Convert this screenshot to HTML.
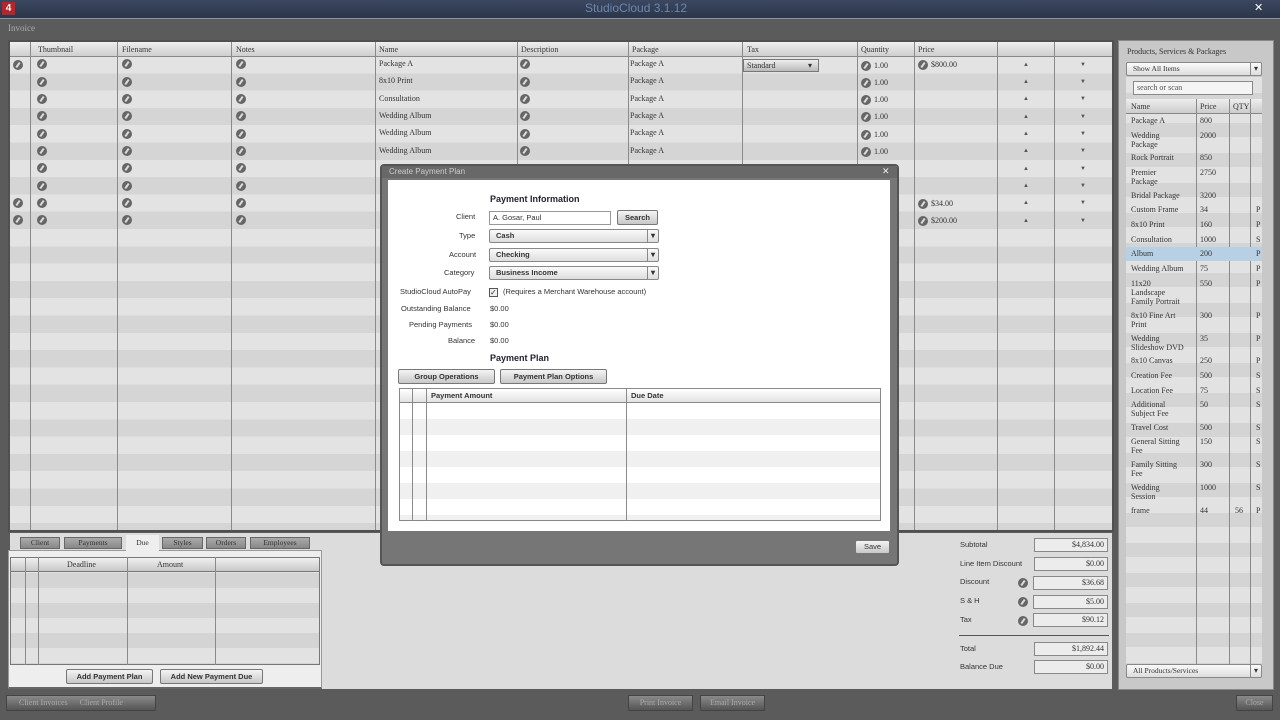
<!DOCTYPE html>
<html><head><meta charset="utf-8"><style>
*{margin:0;padding:0;box-sizing:border-box}
body{width:1280px;height:720px;overflow:hidden;background:#5b5b5b;font-family:"Liberation Serif",serif;font-size:8px;color:#333;position:relative}
.a{position:absolute}
.t{position:absolute;white-space:nowrap;line-height:10px}
.ic{position:absolute;width:10px;height:10px;border-radius:50%;background:#666}
.ic::after{content:"";position:absolute;left:4px;top:2px;width:2px;height:6px;background:#ddd;transform:rotate(35deg)}
.vl{position:absolute;width:1px;background:#8a8a8a}
.btn{position:absolute;border:1px solid #777;border-radius:2px;background:linear-gradient(#f4f4f4,#c8c8c8);text-align:center;font-weight:bold;font-family:"Liberation Sans",sans-serif;font-size:7.5px;color:#333}
.tab{position:absolute;border:1px solid #666;background:linear-gradient(#aaa,#888);text-align:center;font-size:7.5px;color:#333;line-height:10px}
.sans{font-family:"Liberation Sans",sans-serif}
.dd{position:absolute;border:1px solid #888;border-radius:2px;background:linear-gradient(#fafafa,#ddd);font-family:"Liberation Sans",sans-serif;font-weight:bold;font-size:7.5px;padding-left:6px}
.dd::after{content:"▾";position:absolute;right:0;top:0;width:10px;border-left:1px solid #888;text-align:center;font-size:8px}
.box{position:absolute;border:1px solid #888;background:#ececec;text-align:right;padding-right:3px;font-size:8px;line-height:12px}
.ar{position:absolute;font-size:6px;color:#555}
</style></head><body>
<!-- title bar -->
<div class="a" style="left:0;top:0;width:1280px;height:18px;background:linear-gradient(#3b4860,#2b364a)"></div>
<div class="a" style="left:2px;top:2px;width:13px;height:13px;background:#b3262b;color:#fff;font:bold 10px 'Liberation Sans';text-align:center;line-height:13px">4</div>
<div class="t sans" style="left:585px;top:3px;font-size:12px;color:#6f86ad">StudioCloud 3.1.12</div>
<div class="t sans" style="left:1254px;top:3px;font-size:11px;color:#fff">✕</div>
<div class="a" style="left:0;top:18px;width:1280px;height:1px;background:#8a94a4"></div>
<div class="t" style="left:8px;top:23px;font-size:9px;color:#aaa">Invoice</div>

<!-- main grid -->
<div class="a" style="left:8px;top:40px;width:1106px;height:492px;background:#505050"></div>
<div class="a" style="left:10px;top:42px;width:1102px;height:488px;background:repeating-linear-gradient(#e3e3e3 0 17.3px,#d5d5d5 17.3px 34.6px);background-position:0 14px"></div>
<div class="a" style="left:10px;top:42px;width:1102px;height:15px;background:linear-gradient(#eee,#cfcfcf);border-bottom:1px solid #888"></div>
<div class="vl" style="left:30px;top:42px;height:488px"></div>
<div class="vl" style="left:117px;top:42px;height:488px"></div>
<div class="vl" style="left:231px;top:42px;height:488px"></div>
<div class="vl" style="left:375px;top:42px;height:488px"></div>
<div class="vl" style="left:517px;top:42px;height:488px"></div>
<div class="vl" style="left:628px;top:42px;height:488px"></div>
<div class="vl" style="left:742px;top:42px;height:488px"></div>
<div class="vl" style="left:857px;top:42px;height:488px"></div>
<div class="vl" style="left:914px;top:42px;height:488px"></div>
<div class="vl" style="left:997px;top:42px;height:488px"></div>
<div class="vl" style="left:1054px;top:42px;height:488px"></div>
<div class="t" style="left:38px;top:45px">Thumbnail</div>
<div class="t" style="left:122px;top:45px">Filename</div>
<div class="t" style="left:236px;top:45px">Notes</div>
<div class="t" style="left:379px;top:45px">Name</div>
<div class="t" style="left:521px;top:45px">Description</div>
<div class="t" style="left:632px;top:45px">Package</div>
<div class="t" style="left:747px;top:45px">Tax</div>
<div class="t" style="left:861px;top:45px">Quantity</div>
<div class="t" style="left:918px;top:45px">Price</div>

<!-- row content -->
<div class="ic" style="left:13px;top:60px"></div><div class="ic" style="left:13px;top:198px"></div><div class="ic" style="left:13px;top:215px"></div>
<div class="ic" style="left:37px;top:59px"></div><div class="ic" style="left:37px;top:77px"></div><div class="ic" style="left:37px;top:94px"></div><div class="ic" style="left:37px;top:111px"></div><div class="ic" style="left:37px;top:129px"></div><div class="ic" style="left:37px;top:146px"></div><div class="ic" style="left:37px;top:163px"></div><div class="ic" style="left:37px;top:181px"></div><div class="ic" style="left:37px;top:198px"></div><div class="ic" style="left:37px;top:215px"></div>
<div class="ic" style="left:122px;top:59px"></div><div class="ic" style="left:122px;top:77px"></div><div class="ic" style="left:122px;top:94px"></div><div class="ic" style="left:122px;top:111px"></div><div class="ic" style="left:122px;top:129px"></div><div class="ic" style="left:122px;top:146px"></div><div class="ic" style="left:122px;top:163px"></div><div class="ic" style="left:122px;top:181px"></div><div class="ic" style="left:122px;top:198px"></div><div class="ic" style="left:122px;top:215px"></div>
<div class="ic" style="left:236px;top:59px"></div><div class="ic" style="left:236px;top:77px"></div><div class="ic" style="left:236px;top:94px"></div><div class="ic" style="left:236px;top:111px"></div><div class="ic" style="left:236px;top:129px"></div><div class="ic" style="left:236px;top:146px"></div><div class="ic" style="left:236px;top:163px"></div><div class="ic" style="left:236px;top:181px"></div><div class="ic" style="left:236px;top:198px"></div><div class="ic" style="left:236px;top:215px"></div>
<div class="ic" style="left:520px;top:59px"></div><div class="ic" style="left:520px;top:77px"></div><div class="ic" style="left:520px;top:94px"></div><div class="ic" style="left:520px;top:111px"></div><div class="ic" style="left:520px;top:129px"></div><div class="ic" style="left:520px;top:146px"></div>
<div class="t" style="left:379px;top:59px">Package A</div>
<div class="t" style="left:379px;top:76px">8x10 Print</div>
<div class="t" style="left:379px;top:94px">Consultation</div>
<div class="t" style="left:379px;top:111px">Wedding Album</div>
<div class="t" style="left:379px;top:128px">Wedding Album</div>
<div class="t" style="left:379px;top:146px">Wedding Album</div>
<div class="t" style="left:630px;top:59px">Package A</div><div class="t" style="left:630px;top:76px">Package A</div><div class="t" style="left:630px;top:94px">Package A</div><div class="t" style="left:630px;top:111px">Package A</div><div class="t" style="left:630px;top:128px">Package A</div><div class="t" style="left:630px;top:146px">Package A</div>
<div class="a" style="left:743px;top:59px;width:76px;height:13px;border:1px solid #777;background:linear-gradient(#eee,#bbb)"><span class="t" style="left:3px;top:1px">Standard</span><span class="t" style="left:64px;top:1px">▾</span></div>
<div class="ic" style="left:861px;top:61px"></div><div class="ic" style="left:861px;top:78px"></div><div class="ic" style="left:861px;top:95px"></div><div class="ic" style="left:861px;top:112px"></div><div class="ic" style="left:861px;top:130px"></div><div class="ic" style="left:861px;top:147px"></div>
<div class="t" style="left:874px;top:61px">1.00</div><div class="t" style="left:874px;top:78px">1.00</div><div class="t" style="left:874px;top:95px">1.00</div><div class="t" style="left:874px;top:112px">1.00</div><div class="t" style="left:874px;top:130px">1.00</div><div class="t" style="left:874px;top:147px">1.00</div>
<div class="ic" style="left:918px;top:60px"></div><div class="t" style="left:931px;top:60px">$800.00</div>
<div class="ic" style="left:918px;top:199px"></div><div class="t" style="left:931px;top:199px">$34.00</div>
<div class="ic" style="left:918px;top:216px"></div><div class="t" style="left:931px;top:216px">$200.00</div>
<div class="ar" style="left:1023px;top:62px">▲</div><div class="ar" style="left:1080px;top:62px">▼</div>
<div class="ar" style="left:1023px;top:79px">▲</div><div class="ar" style="left:1080px;top:79px">▼</div>
<div class="ar" style="left:1023px;top:96px">▲</div><div class="ar" style="left:1080px;top:96px">▼</div>
<div class="ar" style="left:1023px;top:114px">▲</div><div class="ar" style="left:1080px;top:114px">▼</div>
<div class="ar" style="left:1023px;top:131px">▲</div><div class="ar" style="left:1080px;top:131px">▼</div>
<div class="ar" style="left:1023px;top:148px">▲</div><div class="ar" style="left:1080px;top:148px">▼</div>
<div class="ar" style="left:1023px;top:166px">▲</div><div class="ar" style="left:1080px;top:166px">▼</div>
<div class="ar" style="left:1023px;top:183px">▲</div><div class="ar" style="left:1080px;top:183px">▼</div>
<div class="ar" style="left:1023px;top:200px">▲</div><div class="ar" style="left:1080px;top:200px">▼</div>
<div class="ar" style="left:1023px;top:218px">▲</div><div class="ar" style="left:1080px;top:218px">▼</div>

<!-- bottom light area -->
<div class="a" style="left:10px;top:533px;width:1102px;height:156px;background:#dcdcdc"></div>
<div class="a" style="left:8px;top:550px;width:314px;height:139px;background:#eee;border:1px solid #999;border-bottom:2px solid #666"></div>
<!-- tabs -->
<div class="tab" style="left:20px;top:537px;width:40px;height:12px">Client</div>
<div class="tab" style="left:64px;top:537px;width:58px;height:12px">Payments</div>
<div class="a" style="left:126px;top:535px;width:33px;height:16px;background:#eee;text-align:center;line-height:16px;font-size:7.5px">Due</div>
<div class="tab" style="left:162px;top:537px;width:41px;height:12px">Styles</div>
<div class="tab" style="left:206px;top:537px;width:40px;height:12px">Orders</div>
<div class="tab" style="left:250px;top:537px;width:60px;height:12px">Employees</div>
<div class="a" style="left:10px;top:557px;width:310px;height:108px;border:1px solid #777;background:repeating-linear-gradient(#e2e2e2 0 15px,#d4d4d4 15px 30px)"></div>
<div class="a" style="left:10px;top:557px;width:310px;height:15px;background:linear-gradient(#f0f0f0,#c8c8c8);border:1px solid #777"></div>
<div class="vl" style="left:25px;top:557px;height:108px"></div><div class="vl" style="left:38px;top:557px;height:108px"></div><div class="vl" style="left:127px;top:557px;height:108px"></div><div class="vl" style="left:215px;top:557px;height:108px"></div>
<div class="t" style="left:67px;top:560px">Deadline</div><div class="t" style="left:157px;top:560px">Amount</div>
<div class="btn" style="left:66px;top:669px;width:87px;height:15px;line-height:13px">Add Payment Plan</div>
<div class="btn" style="left:160px;top:669px;width:103px;height:15px;line-height:13px">Add New Payment Due</div>

<!-- totals -->
<div class="t sans" style="left:960px;top:540px;font-size:7.5px">Subtotal</div><div class="box" style="left:1034px;top:538px;width:74px;height:14px">$4,834.00</div>
<div class="t sans" style="left:960px;top:559px;font-size:7.5px">Line Item Discount</div><div class="box" style="left:1034px;top:557px;width:74px;height:14px">$0.00</div>
<div class="t sans" style="left:960px;top:577px;font-size:7.5px">Discount</div><div class="ic" style="left:1018px;top:578px"></div><div class="box" style="left:1033px;top:576px;width:75px;height:14px">$36.68</div>
<div class="t sans" style="left:960px;top:596px;font-size:7.5px">S &amp; H</div><div class="ic" style="left:1018px;top:597px"></div><div class="box" style="left:1033px;top:595px;width:75px;height:14px">$5.00</div>
<div class="t sans" style="left:960px;top:615px;font-size:7.5px">Tax</div><div class="ic" style="left:1018px;top:616px"></div><div class="box" style="left:1033px;top:613px;width:75px;height:14px">$90.12</div>
<div class="a" style="left:959px;top:635px;width:150px;height:1px;background:#555"></div>
<div class="t sans" style="left:960px;top:644px;font-size:7.5px">Total</div><div class="box" style="left:1034px;top:642px;width:74px;height:14px">$1,892.44</div>
<div class="t sans" style="left:960px;top:662px;font-size:7.5px">Balance Due</div><div class="box" style="left:1034px;top:660px;width:74px;height:14px">$0.00</div>

<!-- right panel -->
<div class="a" style="left:1118px;top:40px;width:156px;height:650px;background:#c8c8c8;border:1px solid #888"></div>
<div class="t" style="left:1127px;top:47px">Products, Services &amp; Packages</div>
<div class="dd" style="left:1126px;top:62px;width:136px;height:14px;font-weight:normal;line-height:12px;font-family:'Liberation Serif'">Show All Items</div>
<div class="a" style="left:1126px;top:77px;width:136px;height:600px;background:repeating-linear-gradient(#e2e2e2 0 16px,#d4d4d4 16px 30px)"></div>
<div class="a" style="left:1133px;top:81px;width:120px;height:14px;background:#f4f4f4;border:1px solid #888"><span class="t" style="left:3px;top:1px;color:#555">search or scan</span></div>
<div class="a" style="left:1126px;top:99px;width:136px;height:15px;background:linear-gradient(#eee,#ccc);border-bottom:1px solid #888"></div>
<div class="t" style="left:1131px;top:102px">Name</div><div class="t" style="left:1200px;top:102px">Price</div><div class="t" style="left:1233px;top:102px">QTY</div>
<div class="vl" style="left:1196px;top:99px;height:565px"></div><div class="vl" style="left:1229px;top:99px;height:565px"></div><div class="vl" style="left:1250px;top:99px;height:565px"></div>
<div class="a" style="left:1126px;top:247px;width:136px;height:14px;background:#b8d0e4"></div>
<div class="t" style="left:1131px;top:116px">Package A</div><div class="t" style="left:1200px;top:116px">800</div>
<div class="t" style="left:1131px;top:131px;line-height:9px">Wedding<br>Package</div><div class="t" style="left:1200px;top:131px">2000</div>
<div class="t" style="left:1131px;top:153px">Rock Portrait</div><div class="t" style="left:1200px;top:153px">850</div>
<div class="t" style="left:1131px;top:168px;line-height:9px">Premier<br>Package</div><div class="t" style="left:1200px;top:168px">2750</div>
<div class="t" style="left:1131px;top:191px">Bridal Package</div><div class="t" style="left:1200px;top:191px">3200</div>
<div class="t" style="left:1131px;top:205px">Custom Frame</div><div class="t" style="left:1200px;top:205px">34</div><div class="t" style="left:1256px;top:205px">P</div>
<div class="t" style="left:1131px;top:220px">8x10 Print</div><div class="t" style="left:1200px;top:220px">160</div><div class="t" style="left:1256px;top:220px">P</div>
<div class="t" style="left:1131px;top:235px">Consultation</div><div class="t" style="left:1200px;top:235px">1000</div><div class="t" style="left:1256px;top:235px">S</div>
<div class="t" style="left:1131px;top:249px">Album</div><div class="t" style="left:1200px;top:249px">200</div><div class="t" style="left:1256px;top:249px">P</div>
<div class="t" style="left:1131px;top:264px">Wedding Album</div><div class="t" style="left:1200px;top:264px">75</div><div class="t" style="left:1256px;top:264px">P</div>
<div class="t" style="left:1131px;top:279px;line-height:9px">11x20<br>Landscape<br>Family Portrait</div><div class="t" style="left:1200px;top:279px">550</div><div class="t" style="left:1256px;top:279px">P</div>
<div class="t" style="left:1131px;top:311px;line-height:9px">8x10 Fine Art<br>Print</div><div class="t" style="left:1200px;top:311px">300</div><div class="t" style="left:1256px;top:311px">P</div>
<div class="t" style="left:1131px;top:334px;line-height:9px">Wedding<br>Slideshow DVD</div><div class="t" style="left:1200px;top:334px">35</div><div class="t" style="left:1256px;top:334px">P</div>
<div class="t" style="left:1131px;top:356px">8x10 Canvas</div><div class="t" style="left:1200px;top:356px">250</div><div class="t" style="left:1256px;top:356px">P</div>
<div class="t" style="left:1131px;top:371px">Creation Fee</div><div class="t" style="left:1200px;top:371px">500</div><div class="t" style="left:1256px;top:371px">S</div>
<div class="t" style="left:1131px;top:386px">Location Fee</div><div class="t" style="left:1200px;top:386px">75</div><div class="t" style="left:1256px;top:386px">S</div>
<div class="t" style="left:1131px;top:400px;line-height:9px">Additional<br>Subject Fee</div><div class="t" style="left:1200px;top:400px">50</div><div class="t" style="left:1256px;top:400px">S</div>
<div class="t" style="left:1131px;top:423px">Travel Cost</div><div class="t" style="left:1200px;top:423px">500</div><div class="t" style="left:1256px;top:423px">S</div>
<div class="t" style="left:1131px;top:437px;line-height:9px">General Sitting<br>Fee</div><div class="t" style="left:1200px;top:437px">150</div><div class="t" style="left:1256px;top:437px">S</div>
<div class="t" style="left:1131px;top:460px;line-height:9px">Family Sitting<br>Fee</div><div class="t" style="left:1200px;top:460px">300</div><div class="t" style="left:1256px;top:460px">S</div>
<div class="t" style="left:1131px;top:483px;line-height:9px">Wedding<br>Session</div><div class="t" style="left:1200px;top:483px">1000</div><div class="t" style="left:1256px;top:483px">S</div>
<div class="t" style="left:1131px;top:506px">frame</div><div class="t" style="left:1200px;top:506px">44</div><div class="t" style="left:1235px;top:506px">56</div><div class="t" style="left:1256px;top:506px">P</div>
<div class="dd" style="left:1126px;top:664px;width:136px;height:14px;font-weight:normal;line-height:12px;font-family:'Liberation Serif'">All Products/Services</div>

<!-- bottom bar buttons -->
<div class="a" style="left:6px;top:695px;width:150px;height:16px;background:linear-gradient(#8a8a8a,#555);border:1px solid #444;color:#aaa;font-size:8px;line-height:14px;padding-left:12px">Client Invoices &nbsp;&nbsp;&nbsp;&nbsp; Client Profile</div>
<div class="a" style="left:628px;top:695px;width:65px;height:16px;background:linear-gradient(#8a8a8a,#555);border:1px solid #444;color:#aaa;text-align:center;line-height:14px">Print Invoice</div>
<div class="a" style="left:700px;top:695px;width:65px;height:16px;background:linear-gradient(#8a8a8a,#555);border:1px solid #444;color:#aaa;text-align:center;line-height:14px">Email Invoice</div>
<div class="a" style="left:1236px;top:695px;width:37px;height:16px;background:linear-gradient(#8a8a8a,#555);border:1px solid #444;color:#aaa;text-align:center;line-height:14px">Close</div>

<!-- dialog -->
<div class="a" style="left:380px;top:164px;width:519px;height:402px;background:#767676;border:2px solid #555;border-radius:4px"></div>
<div class="a" style="left:382px;top:166px;width:515px;height:12px;background:#686868"></div>
<div class="t sans" style="left:389px;top:167px;color:#ccc;font-size:8px">Create Payment Plan</div>
<div class="t sans" style="left:882px;top:166px;color:#eee;font-size:9px">✕</div>
<div class="a" style="left:388px;top:180px;width:502px;height:351px;background:#fff"></div>
<div class="sans" style="position:absolute;left:0;top:0;font-size:7.5px;color:#333">
<div class="t" style="left:490px;top:194px;font-size:9px;font-weight:bold;color:#223">Payment Information</div>
<div class="t" style="left:456px;top:212px">Client</div>
<div class="a" style="left:489px;top:211px;width:122px;height:14px;border:1px solid #999;background:#fff"><span class="t" style="left:3px;top:1px">A. Gosar, Paul</span></div>
<div class="btn" style="left:617px;top:210px;width:41px;height:15px;line-height:13px">Search</div>
<div class="t" style="left:459px;top:231px">Type</div>
<div class="dd" style="left:489px;top:229px;width:170px;height:14px;line-height:12px">Cash</div>
<div class="t" style="left:449px;top:250px">Account</div>
<div class="dd" style="left:489px;top:248px;width:170px;height:14px;line-height:12px">Checking</div>
<div class="t" style="left:444px;top:268px">Category</div>
<div class="dd" style="left:489px;top:266px;width:170px;height:14px;line-height:12px">Business Income</div>
<div class="t" style="left:400px;top:287px">StudioCloud AutoPay</div>
<div class="a" style="left:489px;top:288px;width:9px;height:9px;border:1px solid #555;background:#eee;font-size:8px;line-height:7px">✓</div>
<div class="t" style="left:503px;top:287px">(Requires a Merchant Warehouse account)</div>
<div class="t" style="left:401px;top:304px">Outstanding Balance</div><div class="t" style="left:490px;top:304px">$0.00</div>
<div class="t" style="left:409px;top:320px">Pending Payments</div><div class="t" style="left:490px;top:320px">$0.00</div>
<div class="t" style="left:448px;top:336px">Balance</div><div class="t" style="left:490px;top:336px">$0.00</div>
<div class="t" style="left:490px;top:353px;font-size:9px;font-weight:bold;color:#223">Payment Plan</div>
<div class="btn" style="left:398px;top:369px;width:97px;height:15px;line-height:13px">Group Operations</div>
<div class="btn" style="left:500px;top:369px;width:107px;height:15px;line-height:13px">Payment Plan Options</div>
<div class="a" style="left:399px;top:388px;width:482px;height:133px;border:1px solid #888;background:repeating-linear-gradient(#fff 0 16px,#f0f0f0 16px 32px);background-position:0 14px"></div>
<div class="a" style="left:399px;top:388px;width:482px;height:15px;border:1px solid #888;background:linear-gradient(#fff,#e2e2e2)"></div>
<div class="vl" style="left:412px;top:388px;height:133px"></div><div class="vl" style="left:426px;top:388px;height:133px"></div><div class="vl" style="left:626px;top:388px;height:133px"></div>
<div class="t" style="left:431px;top:391px;font-weight:bold">Payment Amount</div>
<div class="t" style="left:631px;top:391px;font-weight:bold">Due Date</div>
</div>
<div class="btn" style="left:855px;top:540px;width:35px;height:14px;line-height:12px;font-weight:normal">Save</div>
</body></html>
